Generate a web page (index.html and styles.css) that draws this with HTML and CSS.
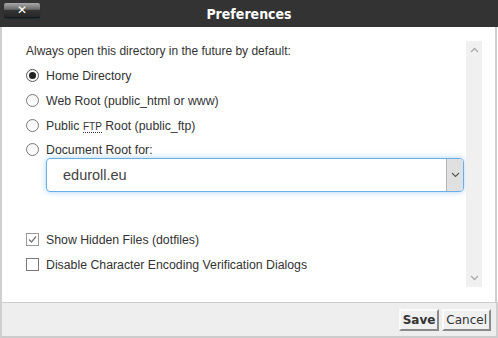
FILE: index.html
```html
<!DOCTYPE html>
<html>
<head>
<meta charset="utf-8">
<link rel="stylesheet" href="styles.css">
</head>
<body>
<div class="dialog">
  <div class="header">
    <div class="close">✕</div>
    <div class="title">Preferences</div>
  </div>
  <div class="body">
    <div class="content">
      <div class="row">Always open this directory in the future by default:</div>
      <div class="row"><span class="radio checked"></span><span class="label">Home Directory</span></div>
      <div class="row"><span class="radio"></span><span class="label">Web Root (public_html or www)</span></div>
      <div class="row"><span class="radio"></span><span class="label">Public <abbr class="abbr">FTP</abbr> Root (public_ftp)</span></div>
      <div class="row tight"><span class="radio"></span><span class="label">Document Root for:</span></div>
      <div class="select">
        <span class="select-text">eduroll.eu</span>
        <span class="select-arrow">
          <svg width="9" height="6" viewBox="0 0 9 6"><polyline points="1,1 4.5,4.5 8,1" fill="none" stroke="#555" stroke-width="1.1"/></svg>
        </span>
      </div>
      <div class="row first-check"><span class="check checked">
        <svg width="11" height="11" viewBox="0 0 11 11"><polyline points="2,5.5 4.5,8 9,2.5" fill="none" stroke="#777" stroke-width="1.3"/></svg>
      </span><span class="label">Show Hidden Files (dotfiles)</span></div>
      <div class="row"><span class="check"></span><span class="label">Disable Character Encoding Verification Dialogs</span></div>
    </div>
    <div class="scrollbar">
      <svg width="9" height="6" viewBox="0 0 9 6"><polyline points="1,5 4.5,1.5 8,5" fill="none" stroke="#aaa" stroke-width="1.3"/></svg>
      <svg width="9" height="6" viewBox="0 0 9 6"><polyline points="1,1 4.5,4.5 8,1" fill="none" stroke="#aaa" stroke-width="1.3"/></svg>
    </div>
  </div>
  <div class="footer">
    <button class="btn save">Save</button>
    <button class="btn">Cancel</button>
  </div>
</div>
</body>
</html>
```
FILE: styles.css
```css
html, body {
  margin: 0;
  padding: 0;
  background: #fff;
}
.dialog {
  width: 498px;
  height: 338px;
  display: flex;
  flex-direction: column;
  font-family: "Liberation Sans", Arial, sans-serif;
  color: #333;
}
.header {
  height: 27px;
  flex: none;
  background: #333;
  position: relative;
  display: flex;
  align-items: center;
  justify-content: center;
}
.close {
  position: absolute;
  left: 4px;
  top: 3px;
  width: 36px;
  height: 15px;
  border-radius: 2px;
  background: linear-gradient(#a9a9a9, #6a6a6a 42%, #333 50%, #262626);
  box-shadow: 0 1px 1px #1c2c30, inset 0 -1px 0 #1a1a1a;
  color: #fff;
  font-family: "DejaVu Sans", sans-serif;
  font-weight: bold;
  font-size: 12px;
  line-height: 15px;
  text-align: center;
}
.title {
  color: #fff;
  font-family: "DejaVu Sans Condensed", "DejaVu Sans", sans-serif;
  font-weight: bold;
  font-size: 14px;
  line-height: 27px;
  padding-top: 1px;
}
.body {
  flex: 1;
  display: flex;
  border-left: 2px solid #cfcfcf;
  border-right: 2px solid #cfcfcf;
  margin-right: 1px;
  background: #fff;
}
.content {
  flex: 1;
  padding: 11px 0 0 24px;
  font-size: 12px;
}
.row {
  height: 25px;
  display: flex;
  align-items: center;
}
.row.tight {
  height: 17px;
  padding-top: 3px;
}
.row.first-check {
  margin-top: 35px;
}
.label {
  margin-left: 7px;
  font-size: 12.3px;
}
.abbr {
  text-decoration: none;
  border-bottom: 1px dotted #333;
  font-size: 10px;
}
.radio {
  width: 11px;
  height: 11px;
  border: 1px solid #7a7a7a;
  border-radius: 50%;
  background: linear-gradient(#f4f4f4, #fff);
  display: flex;
  align-items: center;
  justify-content: center;
  flex: none;
}
.radio.checked {
  border-color: #555;
}
.radio.checked::after {
  content: "";
  width: 7px;
  height: 7px;
  border-radius: 50%;
  background: #222;
}
.check {
  width: 11px;
  height: 11px;
  border: 1px solid #7a7a7a;
  background: #fff;
  display: flex;
  align-items: center;
  justify-content: center;
  flex: none;
}
.check.checked {
  border-color: #999;
}
.select {
  margin-left: 20px;
  width: 416px;
  height: 32px;
  border: 1px solid #66afe9;
  border-radius: 4px;
  box-shadow: 0 0 6px rgba(102, 175, 233, 0.55);
  display: flex;
  align-items: center;
  overflow: hidden;
}
.select-text {
  flex: 1;
  padding-left: 16px;
  font-size: 14.5px;
  color: #444;
}
.select-arrow {
  width: 16px;
  height: 32px;
  background: #e0e0e0;
  border-left: 1px solid #b5b5b5;
  display: flex;
  align-items: center;
  justify-content: center;
}
.scrollbar {
  width: 16px;
  height: 246px;
  margin: 14px 13px 0 0;
  background: #f0f0f0;
  display: flex;
  flex-direction: column;
  align-items: center;
  justify-content: space-between;
  padding: 6px 0;
  box-sizing: border-box;
}
.footer {
  height: 33px;
  flex: none;
  background: #eeeeee;
  border-top: 1px solid #cccccc;
  border-bottom: 2px solid #cccccc;
  border-left: 2px solid #cfcfcf;
  border-right: 2px solid #cfcfcf;
  display: flex;
  align-items: center;
  justify-content: flex-end;
  gap: 3px;
  padding-right: 5px;
}
.btn {
  font-family: "DejaVu Sans", Verdana, sans-serif;
  font-size: 12px;
  color: #333;
  background: #f0f0f0;
  border: 2px solid;
  border-color: #fafafa #8a8a8a #8a8a8a #fafafa;
  height: 22px;
  padding: 0 2px;
  margin: 0;
  line-height: 16px;
}
.btn.save {
  font-weight: bold;
}
```
